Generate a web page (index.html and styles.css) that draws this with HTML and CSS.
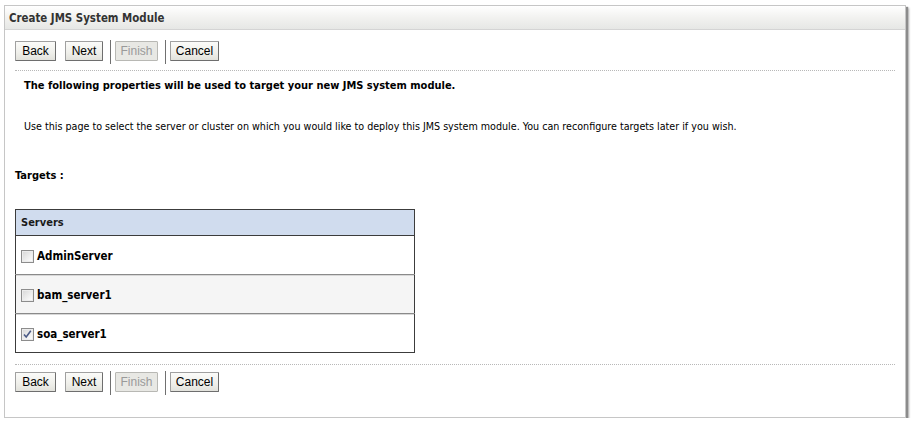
FILE: index.html
```html
<!DOCTYPE html>
<html lang="en">
<head>
    <meta charset="UTF-8">
    <title>Create JMS System Module</title>
    <link rel="stylesheet" href="styles.css">
</head>
<body>
    <div class="panel">
        <div class="panel-header">Create JMS System Module</div>
        <div class="panel-body">
            <div class="button-bar">
                <button class="btn btn-back">Back</button>
                <button class="btn btn-next">Next</button>
                <span class="sep"></span>
                <button class="btn btn-finish" disabled>Finish</button>
                <span class="sep"></span>
                <button class="btn btn-cancel">Cancel</button>
            </div>
            <div class="intro">
                <p class="lead">The following properties will be used to target your new JMS system module.</p>
                <p class="desc">Use this page to select the server or cluster on which you would like to deploy this JMS system module. You can reconfigure targets later if you wish.</p>
            </div>
            <h3 class="targets-title">Targets :</h3>
            <table class="servers">
                <thead>
                    <tr><th>Servers</th></tr>
                </thead>
                <tbody>
                    <tr><td><label><span class="check"></span><span>AdminServer</span></label></td></tr>
                    <tr class="alt"><td><label><span class="check"></span><span>bam_server1</span></label></td></tr>
                    <tr><td><label><span class="check checked"><svg width="11" height="11" viewBox="0 0 11 11"><path d="M2 5.5 L4.2 8 L8.8 1.8" fill="none" stroke="#4b5a86" stroke-width="1.6"/></svg></span><span>soa_server1</span></label></td></tr>
                </tbody>
            </table>
            <div class="button-bar bottom">
                <button class="btn btn-back">Back</button>
                <button class="btn btn-next">Next</button>
                <span class="sep"></span>
                <button class="btn btn-finish" disabled>Finish</button>
                <span class="sep"></span>
                <button class="btn btn-cancel">Cancel</button>
            </div>
        </div>
    </div>
</body>
</html>
```

FILE: styles.css
```css
body {
    margin: 0;
    padding: 5px 0 0 4px;
    background: #fff;
    font-family: "DejaVu Sans Condensed", "DejaVu Sans", sans-serif;
    font-size: 11px;
    color: #000;
}

.panel {
    width: 900px;
    height: 411px;
    border: 1px solid #c6c6c6;
    box-shadow: 2px 2px 1px #8c8c8c, 3px 3px 2px #b0b0b0;
    background: #fff;
}

.panel-header {
    height: 23px;
    line-height: 24px;
    padding-left: 4px;
    font-weight: bold;
    font-size: 11.4px;
    color: #333;
    background: linear-gradient(#ffffff, #f2f2f0 50%, #e6e7e5);
    border-bottom: 1px solid #d4d4d4;
}

.panel-body {
    padding: 11px 10px 0 10px;
}

.button-bar {
    display: flex;
    align-items: flex-start;
    height: 29px;
    border-bottom: 1px dotted #b8b8b8;
}

.button-bar.bottom {
    height: 24px;
    border-bottom: none;
    border-top: 1px dotted #b8b8b8;
    padding-top: 7px;
    margin-top: 11px;
}

.btn {
    height: 20px;
    padding: 0;
    font-family: "Liberation Sans", Arial, sans-serif;
    font-size: 12px;
    color: #000;
    background: linear-gradient(#fbfbf9, #efefea 60%, #e2e2dc);
    border: 1px solid #a0a0a0;
    border-right-color: #6e6e6e;
    border-bottom-color: #6e6e6e;
    border-radius: 1px;
    margin-right: 9px;
}

.btn-back { width: 41px; }
.btn-next { width: 38px; margin-right: 7px; }
.btn-finish { width: 43px; margin-right: 7px; color: #9a9a9a; background: #e8e8e4; border-color: #b8b8b4; }
.btn-cancel { width: 49px; }

.sep {
    width: 1px;
    height: 24px;
    margin-top: -1px;
    background: #707070;
    margin-right: 4px;
}

.intro {
    padding-left: 9px;
}

.lead {
    font-weight: bold;
    margin: 8px 0 0;
    line-height: 14px;
}

.desc {
    font-size: 10.65px;
    margin: 27px 0 0;
    line-height: 14px;
}

.targets-title {
    font-size: 11px;
    font-weight: bold;
    margin: 35px 0 0;
    line-height: 14px;
}

.servers {
    margin-top: 26px;
    width: 400px;
    border-collapse: collapse;
    border: 1px solid #3c3c3c;
}

.servers th {
    text-align: left;
    height: 25px;
    padding: 0 5px;
    background: #d0dcee;
    border-bottom: 1px solid #3c3c3c;
    font-size: 11px;
    color: #1a1a1a;
}

.servers td {
    height: 36px;
    padding: 2px 0 0 4px;
    border-top: 1px solid #8a8a8a;
    box-shadow: inset 0 1px 0 #d8d8d8;
    font-weight: bold;
    font-size: 11.5px;
}

.servers tbody tr:first-child td {
    border-top: none;
    box-shadow: none;
}

.servers tr.alt td {
    background: #f5f5f5;
}

.servers label {
    display: flex;
    align-items: center;
}

.check {
    display: flex;
    align-items: center;
    justify-content: center;
    box-sizing: border-box;
    width: 13px;
    height: 13px;
    margin: 0 3px 0 1px;
    border: 1px solid #8c8c8c;
    background: linear-gradient(135deg, #d6d6d6, #f4f4f4 70%, #ffffff);
    box-shadow: inset 0 0 0 1px #ececec;
}
```
